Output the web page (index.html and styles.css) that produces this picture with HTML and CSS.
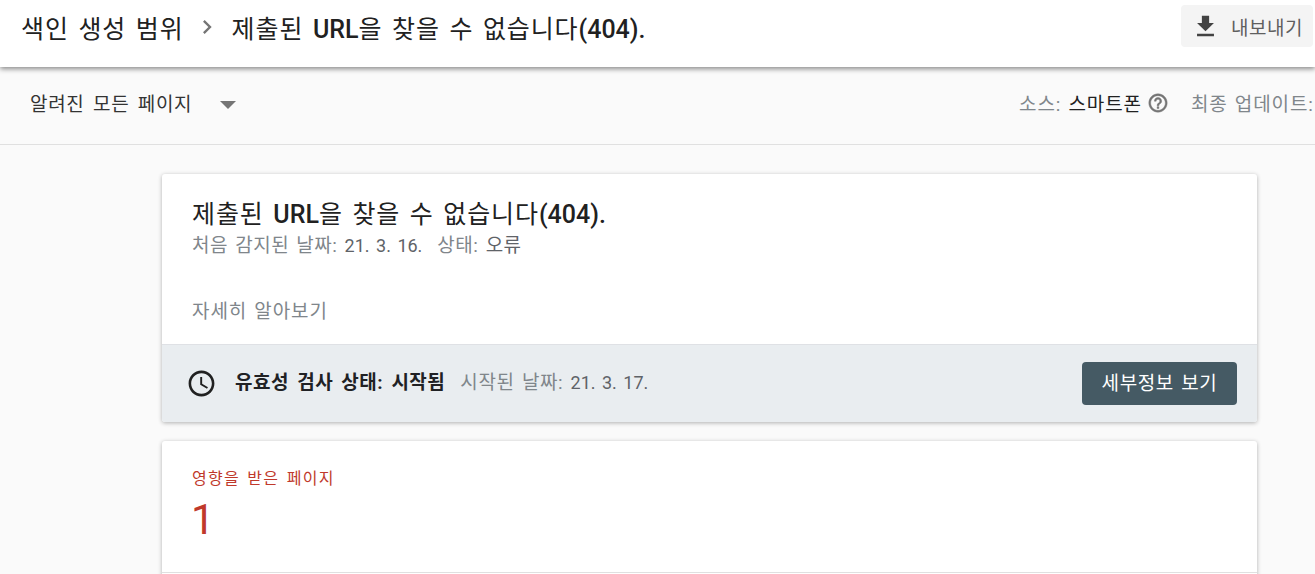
FILE: index.html
```html
<!DOCTYPE html>
<html lang="ko">
<head>
    <title>색인 생성 범위</title>
    <link rel="stylesheet" href="styles.css">
</head>
<body>
    <header class="topbar">
        <div class="crumbs">
            <span>색인 생성 범위</span>
            <svg class="crumb-arrow" width="28" height="28" viewBox="0 0 24 24"><path d="M8.6 16.6 13.2 12 8.6 7.4 10 6l6 6-6 6z" fill="#757575"/></svg>
            <span>제출된 <span class="med">URL</span>을 찾을 수 없습니다<span class="med">(404).</span></span>
        </div>
        <button class="export-btn">
            <svg width="29" height="29" viewBox="0 0 24 24"><path d="M19 9h-4V3H9v6H5l7 7 7-7zM5 18v2h14v-2H5z" fill="#424242"/></svg>
            <span>내보내기</span>
        </button>
    </header>

    <div class="filterbar">
        <div class="filter-select">
            <span>알려진 모든 페이지</span>
            <span class="caret"></span>
        </div>
        <div class="filter-meta">
            <span>소스: <span class="dark">스마트폰</span></span>
            <svg width="22" height="22" viewBox="0 0 24 24"><path d="M11 18h2v-2h-2v2zm1-16C6.48 2 2 6.48 2 12s4.48 10 10 10 10-4.48 10-10S17.52 2 12 2zm0 18c-4.41 0-8-3.59-8-8s3.59-8 8-8 8 3.59 8 8-3.59 8-8 8zm0-14c-2.21 0-4 1.79-4 4h2c0-1.1.9-2 2-2s2 .9 2 2c0 2-3 1.75-3 5h2c0-2.25 3-2.5 3-5 0-2.21-1.79-4-4-4z" fill="#757575" stroke="#757575" stroke-width="0.5"/></svg>
            <span class="updated">최종 업데이트:</span>
        </div>
    </div>

    <main class="content">
        <section class="card">
            <div class="card-body">
                <h2 class="card-title">제출된 <span class="med">URL</span>을 찾을 수 없습니다<span class="med">(404).</span></h2>
                <p class="card-sub">
                    <span>처음 감지된 날짜: <span class="num">21. 3. 16.</span></span>
                    <span>상태: <span class="val">오류</span></span>
                </p>
                <a class="learn-link">자세히 알아보기</a>
            </div>
            <div class="status-strip">
                <svg width="31" height="31" viewBox="0 0 24 24"><path d="M11.99 2C6.47 2 2 6.48 2 12s4.47 10 9.99 10C17.52 22 22 17.52 22 12S17.52 2 11.99 2zM12 20c-4.42 0-8-3.58-8-8s3.58-8 8-8 8 3.58 8 8-3.58 8-8 8zm.5-13H11v6l5.25 3.15.75-1.23-4.5-2.67z" fill="#212121"/></svg>
                <strong class="status-name">유효성 검사 상태: 시작됨</strong>
                <span class="status-date">시작된 날짜: <span class="num">21. 3. 17.</span></span>
                <button class="detail-btn">세부정보 보기</button>
            </div>
        </section>

        <section class="card">
            <div class="stat">
                <div class="stat-label">영향을 받은 페이지</div>
                <div class="stat-value">1</div>
            </div>
            <div class="stat-foot"></div>
        </section>
    </main>
</body>
</html>
```

FILE: styles.css
```css
html, body {
    height: 100%;
}
body {
    margin: 0;
    overflow: hidden;
    background-color: #fafafa;
    color: #212121;
    font-family: Roboto, "Noto Sans CJK KR", sans-serif;
}
.med {
    font-weight: 500;
    letter-spacing: 0;
}
.topbar {
    position: relative;
    display: flex;
    align-items: center;
    justify-content: space-between;
    height: 67px;
    padding: 0 2px 0 21px;
    background-color: #ffffff;
    box-shadow: 0 2px 5px rgba(0,0,0,0.45);
    box-sizing: border-box;
}
.crumbs {
    display: flex;
    align-items: center;
    margin-top: -14px;
    font-size: 25px;
    letter-spacing: 0.9px;
    word-spacing: 2.5px;
    color: #212121;
    white-space: nowrap;
}
.crumb-arrow {
    margin: 0 11px 0 9px;
}
.export-btn {
    display: flex;
    align-items: center;
    gap: 11px;
    width: 132px;
    height: 42px;
    margin-top: -15px;
    padding: 0 0 0 10px;
    border: none;
    border-radius: 4px;
    background-color: #f4f4f4;
    color: #5f5f5f;
    font-family: inherit;
    font-size: 19px;
    letter-spacing: 0.5px;
    white-space: nowrap;
}
.filterbar {
    display: flex;
    align-items: center;
    justify-content: space-between;
    height: 78px;
    padding: 0 0 6px 30px;
    border-bottom: 1px solid #e0e0e0;
    box-sizing: border-box;
    white-space: nowrap;
}
.filter-select {
    display: flex;
    align-items: center;
    font-size: 19px;
    letter-spacing: 0.7px;
    word-spacing: 3px;
    color: #333333;
}
.caret {
    width: 0;
    height: 0;
    margin: 4px 0 0 28px;
    border-left: 8px solid transparent;
    border-right: 8px solid transparent;
    border-top: 8px solid #757575;
}
.filter-meta {
    display: flex;
    align-items: center;
    flex: none;
    width: 296px;
    overflow: hidden;
    font-size: 19px;
    letter-spacing: 0.9px;
    word-spacing: 1.5px;
    color: #80868b;
}
.filter-meta svg {
    flex: none;
    margin-left: 5px;
}
.updated {
    margin-left: 22px;
}
.dark {
    color: #212121;
}
.content {
    width: 1095px;
    margin: 29px 0 0 162px;
}
.card {
    margin-bottom: 19px;
    border-radius: 3px;
    background-color: #ffffff;
    box-shadow: 0 1px 4px rgba(0,0,0,0.3);
    overflow: hidden;
}
.card-body {
    height: 170px;
    padding: 26px 30px 0;
    box-sizing: border-box;
}
.card-title {
    margin: 0;
    font-size: 25px;
    font-weight: 400;
    line-height: 30px;
    letter-spacing: 0.9px;
    word-spacing: 2.5px;
}
.card-sub {
    display: flex;
    gap: 15px;
    margin: 3px 0 0;
    font-size: 19px;
    line-height: 26px;
    letter-spacing: 0.5px;
    word-spacing: 2px;
    color: #80868b;
}
.val {
    color: #5f6368;
}
.num {
    color: #5f6368;
    font-size: 18px;
    letter-spacing: 0;
    word-spacing: 2px;
}
.learn-link {
    display: block;
    margin-top: 40px;
    font-size: 19px;
    line-height: 26px;
    letter-spacing: 0.9px;
    word-spacing: 1.5px;
    color: #80868b;
}
.status-strip {
    display: flex;
    align-items: center;
    height: 78px;
    padding: 0 20px 0 24px;
    border-top: 1px solid #dfe1e5;
    background-color: #e9edf0;
    box-sizing: border-box;
}
.status-name {
    margin: -6px 0 0 18px;
    font-size: 19px;
    font-weight: 700;
    letter-spacing: 0.5px;
    word-spacing: 3px;
    color: #202124;
}
.status-date {
    margin: -6px 0 0 15px;
    font-size: 19px;
    letter-spacing: 0.6px;
    word-spacing: 2px;
    color: #80868b;
}
.detail-btn {
    margin-left: auto;
    width: 155px;
    height: 43px;
    padding: 0 0 5px;
    border: none;
    border-radius: 4px;
    background-color: #455a64;
    color: #ffffff;
    font-family: inherit;
    font-size: 19px;
    letter-spacing: 0.6px;
    word-spacing: 2px;
}
.stat {
    height: 132px;
    padding: 26px 30px 0;
    box-sizing: border-box;
    border-bottom: 1px solid #e0e0e0;
    color: #c0392b;
}
.stat-label {
    font-size: 16px;
    line-height: 24px;
    letter-spacing: 1.3px;
    word-spacing: 2px;
}
.stat-value {
    margin-left: -1px;
    font-size: 42px;
    line-height: 58px;
}
.stat-foot {
    height: 20px;
}
```
